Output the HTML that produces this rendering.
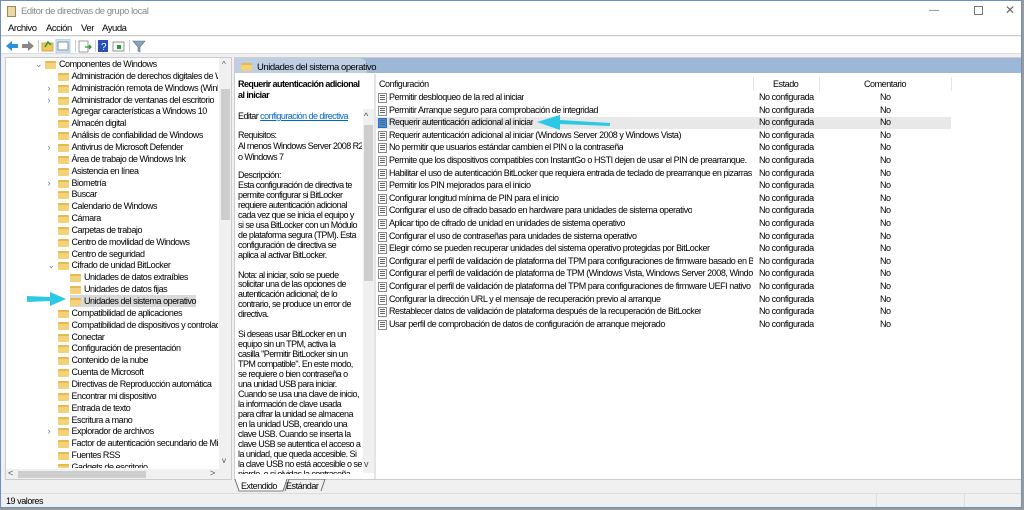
<!DOCTYPE html>
<html><head><meta charset="utf-8"><style>
*{margin:0;padding:0;box-sizing:border-box}
body{width:1024px;height:510px;background:#9a9a9a;font-family:"Liberation Sans",sans-serif;font-size:9px;letter-spacing:-0.45px;color:#000;position:relative;overflow:hidden}
.a{position:absolute;white-space:nowrap}
#win{position:absolute;left:0;top:0;width:1022px;height:508px;background:#f0f0f0;border:1px solid #6d8fc0;overflow:hidden}
.pane{position:absolute;background:#fff;overflow:hidden}
.fold{position:absolute;width:11px;height:8px;background:#f3d27a;border-top:2px solid #e6b94c;border-radius:1px}
.doc{position:absolute;width:9px;height:10px;border:1px solid #8a8a8a;background:#fff}
.doc:after{content:"";position:absolute;left:1px;top:1px;width:5px;height:6px;background:repeating-linear-gradient(#666 0 1px,transparent 1px 2px)}
.chev{position:absolute;color:#777;font-size:9px}
</style></head><body>
<div id="win">
<div style="position:absolute;left:0;top:0;width:1022px;height:20px;background:#fff"></div>
<!-- title -->
<div class="a" style="left:6px;top:5px;width:9px;height:11px;background:#e9d9a8;border:1px solid #a08850"></div>
<div class="a" style="left:20px;top:5px;color:#888;font-size:9.5px">Editor de directivas de grupo local</div>
<div class="a" style="left:928px;top:4px;color:#666;font-size:10px">—</div>
<div class="a" style="left:973px;top:5px;width:9px;height:9px;border:1px solid #777"></div>
<div class="a" style="left:1004px;top:2px;color:#666;font-size:12px">✕</div>
<!-- menu -->
<div style="position:absolute;left:0;top:20px;width:1022px;height:15px;background:#fff;border-bottom:1px solid #ccc"></div>
<div class="a" style="left:7px;top:22px;font-size:9.5px">Archivo</div>
<div class="a" style="left:45px;top:22px;font-size:9.5px">Acción</div>
<div class="a" style="left:80px;top:22px;font-size:9.5px">Ver</div>
<div class="a" style="left:101px;top:22px;font-size:9.5px">Ayuda</div>
<!-- toolbar -->
<div style="position:absolute;left:0;top:36px;width:1022px;height:17px;background:#fff;border-bottom:1px solid #ddd"></div>
<svg class="a" style="left:4px;top:38px" width="150" height="14">
<path d="M1 7 L7 2 V5 H13 V9 H7 V12 Z" fill="#2d8fe0"/>
<path d="M29 7 L23 2 V5 H17 V9 H23 V12 Z" fill="#888"/>
<rect x="33" y="1" width="1" height="12" fill="#ccc"/>
<rect x="37" y="4" width="11" height="8" fill="#f0c860" stroke="#c99a30" stroke-width=".8"/>
<path d="M40 8 L43 3 L46 6" stroke="#2a9a30" fill="none" stroke-width="1.5"/>
<rect x="51" y="0" width="14" height="14" fill="#cde4f7" stroke="#9cc7ee" stroke-width=".8"/>
<rect x="53" y="3" width="10" height="8" fill="#fff" stroke="#777" stroke-width=".8"/>
<rect x="70" y="1" width="1" height="12" fill="#ccc"/>
<rect x="74" y="2" width="9" height="11" fill="#fff" stroke="#888" stroke-width=".8"/>
<path d="M80 8 H86 M84 6 L86 8 L84 10" stroke="#2a9a30" fill="none" stroke-width="1.3"/>
<rect x="90" y="1" width="1" height="12" fill="#ccc"/>
<rect x="93" y="1" width="10" height="12" fill="#2b4fb8"/>
<text x="96" y="11" fill="#fff" font-size="10" font-family="Liberation Sans">?</text>
<rect x="108" y="3" width="11" height="9" fill="#fff" stroke="#777" stroke-width=".8"/>
<rect x="112" y="6" width="4" height="4" fill="#2a9a30"/>
<rect x="124" y="1" width="1" height="12" fill="#ccc"/>
<path d="M128 2 H140 L135 8 V13 L133 12 V8 Z" fill="#8aa3bd" stroke="#5a7390" stroke-width=".6"/>
</svg>

<!-- tree pane -->
<div class="pane" style="left:4px;top:56px;width:227px;height:423px;border:1px solid #ccc">
<div style="position:absolute;left:213px;top:0;width:12px;height:411px;background:#f0f0f0"></div>
<div class="a" style="left:216px;top:2px;color:#555;font-size:8px">^</div>
<div style="position:absolute;left:215px;top:31px;width:9px;height:131px;background:#cdcdcd"></div>
<div class="a" style="left:216px;top:398px;color:#555;font-size:8px">v</div>
<div style="position:absolute;left:0;top:411px;width:225px;height:11px;background:#f0f0f0"></div>
<div style="position:absolute;left:12px;top:413px;width:128px;height:7px;background:#cdcdcd"></div>
<div class="a" style="left:2px;top:410px;color:#555">&lt;</div>
<div class="a" style="left:204px;top:410px;color:#555">&gt;</div>
</div>
<div id="tree" style="position:absolute;left:5px;top:57px;width:212px;height:410px;overflow:hidden"></div>

<!-- right pane -->
<div class="pane" style="left:233px;top:56px;width:788px;height:423px;border:1px solid #ccc"></div>
<div style="position:absolute;left:234px;top:57px;width:786px;height:15px;background:#9db8d6"></div>
<div style="position:absolute;left:234px;top:57px;width:132px;height:15px;background:#bfcfe3;border-top-right-radius:8px"></div>
<div class="fold" style="left:240px;top:62px"></div>
<div class="a" style="left:256px;top:61px;font-size:9.5px">Unidades del sistema operativo</div>

<!-- description -->
<div style="position:absolute;left:234px;top:73px;width:127px;height:400px;overflow:hidden;letter-spacing:-0.55px">
<div class="a" style="left:3px;top:5px;font-weight:bold;line-height:11px;white-space:normal;width:124px">Requerir autenticación adicional al iniciar</div>
<div class="a" style="left:3px;top:37px">Editar <span style="color:#0066cc;text-decoration:underline">configuración de directiva</span></div>
<div class="a" style="left:3px;top:56px;line-height:11px">Requisitos:<br>Al menos Windows Server 2008 R2<br>o Windows 7</div>
<div class="a" style="left:3px;top:97px;line-height:9.95px">Descripción:<br>Esta configuración de directiva te<br>permite configurar si BitLocker<br>requiere autenticación adicional<br>cada vez que se inicia el equipo y<br>si se usa BitLocker con un Módulo<br>de plataforma segura (TPM). Esta<br>configuración de directiva se<br>aplica al activar BitLocker.<br><br>Nota: al iniciar, solo se puede<br>solicitar una de las opciones de<br>autenticación adicional; de lo<br>contrario, se produce un error de<br>directiva.<br><br>Si deseas usar BitLocker en un<br>equipo sin un TPM, activa la<br>casilla "Permitir BitLocker sin un<br>TPM compatible". En este modo,<br>se requiere o bien contraseña o<br>una unidad USB para iniciar.<br>Cuando se usa una clave de inicio,<br>la información de clave usada<br>para cifrar la unidad se almacena<br>en la unidad USB, creando una<br>clave USB. Cuando se inserta la<br>clave USB se autentica el acceso a<br>la unidad, que queda accesible. Si<br>la clave USB no está accesible o se<br>pierde, o si olvidas la contraseña,</div>
</div>
<div style="position:absolute;left:362px;top:108px;width:11px;height:364px;background:#f0f0f0"></div>
<div style="position:absolute;left:363px;top:124px;width:9px;height:156px;background:#cdcdcd"></div>
<div class="a" style="left:363px;top:110px;color:#444;font-size:9px">^</div>
<div class="a" style="left:363px;top:458px;color:#444;font-size:9px">v</div>
<div style="position:absolute;left:373px;top:73px;width:2px;height:405px;background:#e4e4e4"></div>

<!-- tabs -->
<div style="position:absolute;left:234px;top:479px;width:786px;height:12px;background:#f0f0f0"></div>
<svg class="a" style="left:232px;top:478px" width="100" height="13"><path d="M2 0 L6 12 H50 L54 0" fill="#fff" stroke="#555" stroke-width=".8"/><path d="M52 12 L56 0 H92 L88 12" fill="none" stroke="#555" stroke-width=".8"/></svg>
<div class="a" style="left:240px;top:480px">Extendido</div>
<div class="a" style="left:285px;top:480px">Estándar</div>

<!-- list header -->
<div class="a" style="left:378px;top:78px">Configuración</div>
<div style="position:absolute;left:752px;top:76px;width:1px;height:14px;background:#e5e5e5"></div>
<div style="position:absolute;left:818px;top:76px;width:1px;height:14px;background:#e5e5e5"></div>
<div style="position:absolute;left:950px;top:76px;width:1px;height:14px;background:#e5e5e5"></div>
<div class="a" style="left:772px;top:78px">Estado</div>
<div class="a" style="left:863px;top:78px">Comentario</div>
<div style="position:absolute;left:375px;top:116px;width:575px;height:12px;background:#e8e8e8"></div>
<div id="list"></div>

<!-- status -->
<div style="position:absolute;left:0;top:492px;width:1022px;height:1px;background:#dcdcdc"></div>
<div class="a" style="left:5px;top:495px">19 valores</div>
<div style="position:absolute;left:875px;top:493px;width:1px;height:14px;background:#dcdcdc"></div>
<div style="position:absolute;left:963px;top:493px;width:1px;height:14px;background:#dcdcdc"></div>
</div>
<div style="position:absolute;left:0;top:508px;width:1024px;height:2px;background:#9a9a9a"></div>

<!-- cyan arrows -->
<svg class="a" style="left:0;top:0" width="1024" height="510">
<path d="M27 296 L50 297 L50 292 L66 299 L50 306 L50 301 L27 302 Z" fill="#2cc9e6"/>
<path d="M610 126 L560 124 L560 130 L537 122 L560 115 L560 120 L610 123 Z" fill="#2cc9e6"/>
</svg>

<script>
var T=[
[0,'v','Componentes de Windows'],[1,'','Administración de derechos digitales de W'],[1,'>','Administración remota de Windows (WinR'],[1,'>','Administrador de ventanas del escritorio'],[1,'','Agregar características a Windows 10'],[1,'','Almacén digital'],[1,'','Análisis de confiabilidad de Windows'],[1,'>','Antivirus de Microsoft Defender'],[1,'','Área de trabajo de Windows Ink'],[1,'','Asistencia en línea'],[1,'>','Biometría'],[1,'','Buscar'],[1,'','Calendario de Windows'],[1,'','Cámara'],[1,'','Carpetas de trabajo'],[1,'','Centro de movilidad de Windows'],[1,'','Centro de seguridad'],[1,'v','Cifrado de unidad BitLocker'],[2,'','Unidades de datos extraíbles'],[2,'','Unidades de datos fijas'],[2,'','Unidades del sistema operativo'],[1,'','Compatibilidad de aplicaciones'],[1,'','Compatibilidad de dispositivos y controlac'],[1,'','Conectar'],[1,'','Configuración de presentación'],[1,'','Contenido de la nube'],[1,'','Cuenta de Microsoft'],[1,'','Directivas de Reproducción automática'],[1,'','Encontrar mi dispositivo'],[1,'','Entrada de texto'],[1,'','Escritura a mano'],[1,'>','Explorador de archivos'],[1,'','Factor de autenticación secundario de Mic'],[1,'','Fuentes RSS'],[1,'','Gadgets de escritorio'],[1,'','Grabación y difusión de juegos de Windows']];
var h='';
T.forEach(function(r,i){var y=1+i*11.85;var x=53+r[0]*12.5;
if(r[0]==2&&i==20)h+='<div style="position:absolute;left:'+(x-14)+'px;top:'+(y-1)+'px;width:126px;height:12px;background:#d9d9d9"></div>';
if(r[1])h+='<div class="chev" style="left:'+(x-24)+'px;top:'+(y)+'px">'+(r[1]=='v'?'⌄':'›')+'</div>';
h+='<div class="fold" style="left:'+(x-14)+'px;top:'+(y+2)+'px"></div><div class="a" style="left:'+x+'px;top:'+y+'px">'+r[2]+'</div>';});
document.getElementById('tree').innerHTML=h;
var L=['Permitir desbloqueo de la red al iniciar','Permitir Arranque seguro para comprobación de integridad','Requerir autenticación adicional al iniciar','Requerir autenticación adicional al iniciar (Windows Server 2008 y Windows Vista)','No permitir que usuarios estándar cambien el PIN o la contraseña','Permite que los dispositivos compatibles con InstantGo o HSTI dejen de usar el PIN de prearranque.','Habilitar el uso de autenticación BitLocker que requiera entrada de teclado de prearranque en pizarras','Permitir los PIN mejorados para el inicio','Configurar longitud mínima de PIN para el inicio','Configurar el uso de cifrado basado en hardware para unidades de sistema operativo','Aplicar tipo de cifrado de unidad en unidades de sistema operativo','Configurar el uso de contraseñas para unidades de sistema operativo','Elegir cómo se pueden recuperar unidades del sistema operativo protegidas por BitLocker','Configurar el perfil de validación de plataforma del TPM para configuraciones de firmware basado en B...','Configurar el perfil de validación de plataforma de TPM (Windows Vista, Windows Server 2008, Window...','Configurar el perfil de validación de plataforma del TPM para configuraciones de firmware UEFI nativo','Configurar la dirección URL y el mensaje de recuperación previo al arranque','Restablecer datos de validación de plataforma después de la recuperación de BitLocker','Usar perfil de comprobación de datos de configuración de arranque mejorado'];
var g='';
L.forEach(function(t,i){var y=91+i*12.6;
g+='<div class="doc" style="left:377px;top:'+(y+1)+'px'+(i==2?';background:#3d8ee0;border-color:#2a6fc0':'')+'"></div><div class="a" style="left:388px;top:'+y+'px;max-width:364px;overflow:hidden">'+t+'</div><div class="a" style="left:758px;top:'+y+'px">No configurada</div><div class="a" style="left:879px;top:'+y+'px">No</div>';});
document.getElementById('list').innerHTML=g;
</script>
</body></html>
